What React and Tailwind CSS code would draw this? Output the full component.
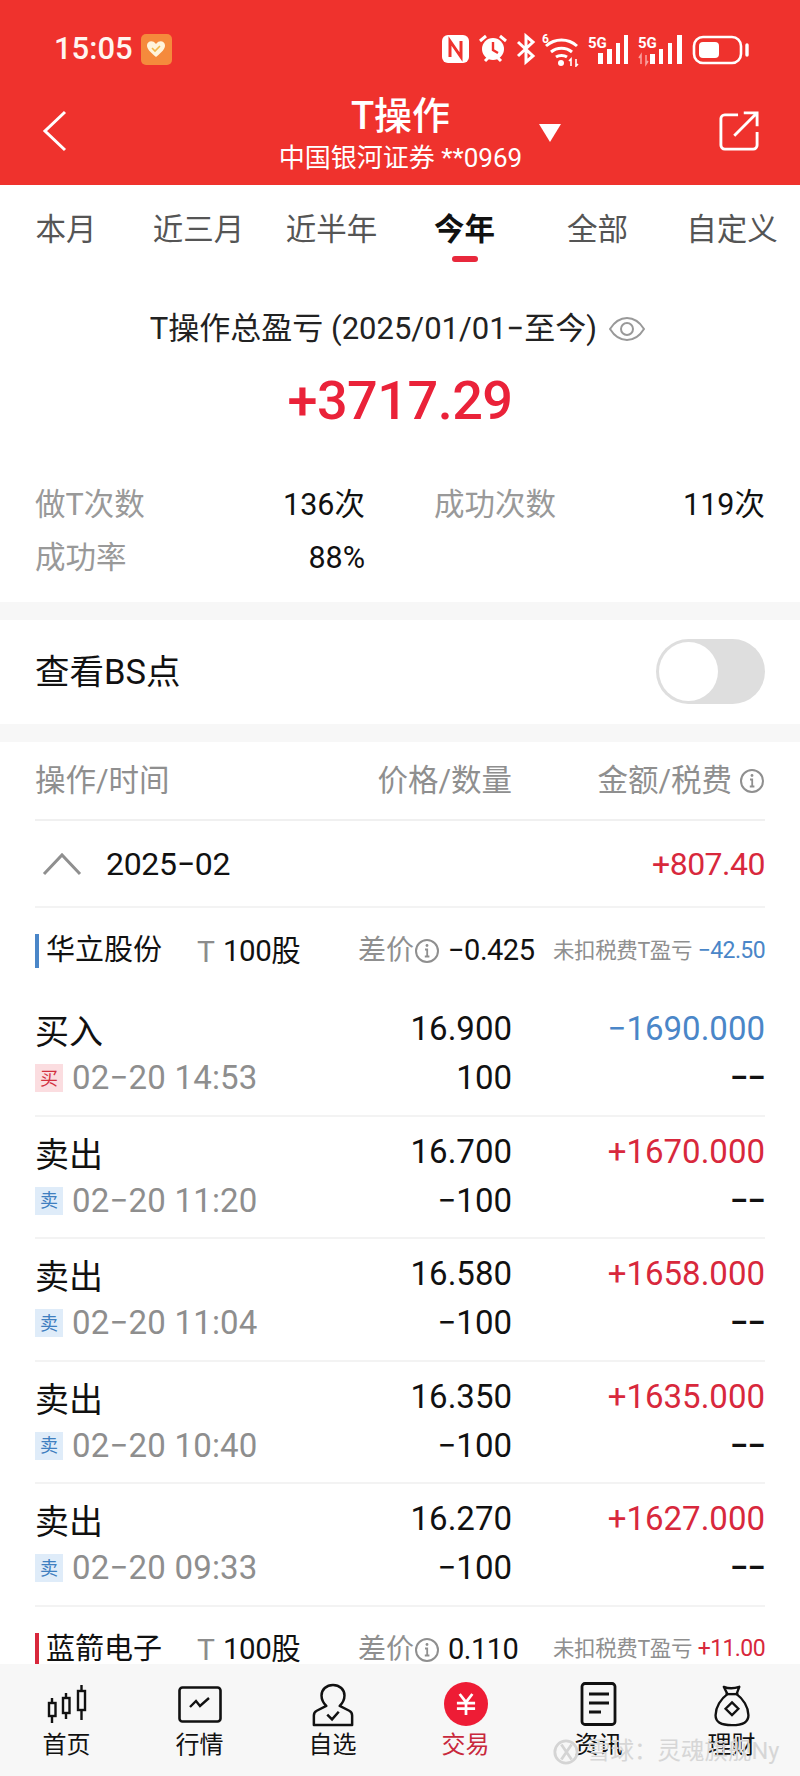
// App.jsx
import React from 'react';

const rows = [
  { side: '买入', time: '02−20 14:53', price: '16.900', qty: '100', amount: '−1690.000' },
  { side: '卖出', time: '02−20 11:20', price: '16.700', qty: '−100', amount: '+1670.000' },
  { side: '卖出', time: '02−20 11:04', price: '16.580', qty: '−100', amount: '+1658.000' },
  { side: '卖出', time: '02−20 10:40', price: '16.350', qty: '−100', amount: '+1635.000' },
  { side: '卖出', time: '02−20 09:33', price: '16.270', qty: '−100', amount: '+1627.000' },
];

const tabs = [
  { label: '本月', w: 'w-[132px]' },
  { label: '近三月', w: 'w-[133px]' },
  { label: '近半年', w: 'w-[133px]' },
  { label: '今年', w: 'w-[133px]', active: true },
  { label: '全部', w: 'w-[133px]' },
  { label: '自定义', w: 'w-[136px]' },
];

const InfoIcon = ({ size = 26, color = '#8f8f8f' }) => (
  <svg width={size} height={size} viewBox="0 0 26 26" fill="none" stroke={color} strokeWidth="2">
    <circle cx="13" cy="13" r="11" />
    <circle cx="13" cy="7.5" r="1.4" fill={color} stroke="none" />
    <path d="M11 11.5h2.2v7M10.8 18.5h4.6" strokeWidth="1.8" />
  </svg>
);

const StatusIcons = () => (
  <svg width="312" height="36" viewBox="0 0 312 36" fill="none">
    {/* nfc */}
    <rect x="0" y="4" width="27" height="28" rx="6" fill="#fff" />
    <path d="M8 26V10l11 16V10" stroke="#ef322d" strokeWidth="3" />
    {/* alarm */}
    <circle cx="51" cy="18" r="11" fill="#fff" />
    <path d="M51 11v8l5 3" stroke="#ef322d" strokeWidth="2.4" />
    <path d="M38 10l6-5M64 10l-6-5M43 30l3-3M59 30l-3-3" stroke="#fff" strokeWidth="3" />
    {/* bluetooth */}
    <path d="M76 11l15 14-7 6V5l7 6-15 14" stroke="#fff" strokeWidth="3" />
    {/* wifi */}
    <text x="100" y="12" fill="#fff" fontSize="12" fontWeight="700" fontFamily="Roboto">6</text>
    <path d="M104 15c9-8 22-8 31 0M109 21c6-5 15-5 21 0M114 26c3-2 8-2 11 0" stroke="#fff" strokeWidth="3" />
    <circle cx="119" cy="32" r="3" fill="#fff" />
    <path d="M129 35v-7l-2 2M134 28v7l2-2" stroke="#fff" strokeWidth="1.6" />
    {/* sim 1 */}
    <text x="146" y="17" fill="#fff" fontSize="15" fontWeight="700" fontFamily="Roboto">5G</text>
    <path d="M156 22h5v11h-5zM165 18h5v15h-5zM174 12h4v21h-4zM182 4h4v29h-4z" fill="#fff" />
    {/* sim 2 */}
    <text x="196" y="17" fill="#fff" fontSize="15" fontWeight="700" fontFamily="Roboto">5G</text>
    <path d="M199 33v-9l-2 3M204 24v9l2-3" stroke="#ffffff88" strokeWidth="1.6" />
    <path d="M208 23h5v10h-5zM217 18h4v15h-4zM226 12h4v21h-4zM235 4h5v29h-5z" fill="#fff" />
    {/* battery */}
    <rect x="252" y="6" width="47" height="26" rx="9" stroke="#fff" strokeWidth="2.6" />
    <rect x="257" y="11" width="20" height="16" rx="4" fill="#fff" />
    <path d="M305 14v10" stroke="#fff" strokeWidth="3.4" strokeLinecap="round" />
  </svg>
);

const NavIcon = ({ name }) => {
  if (name === 'home') {
    return (
      <svg width="40" height="38" viewBox="0 0 40 38" fill="none" stroke="#111" strokeWidth="2.4" className="mt-[3px]">
        <rect x="2" y="18" width="6.500" height="13" /><path d="M5 13v5M5 31v7" />
        <rect x="16" y="13" width="6.500" height="15" /><path d="M19 8v5M19 28v6" />
        <rect x="31" y="6" width="7" height="19" /><path d="M34.500 0v6M34.500 25v10" />
      </svg>
    );
  }
  if (name === 'market') {
    return (
      <svg width="44" height="37" viewBox="0 0 44 37" fill="none" stroke="#111" strokeWidth="2.6" className="mt-[4px]">
        <rect x="1.500" y="1.500" width="41" height="34" rx="3" />
        <path d="M12 21l6-6 4 5 9-8" strokeWidth="2.4" />
      </svg>
    );
  }
  if (name === 'watch') {
    return (
      <svg width="44" height="44" viewBox="0 0 46 46" fill="none" stroke="#111" strokeWidth="2.6" className="mt-[1px]">
        <path d="M3 44h40v-10c0-3-1-4-3-5l-10-5c3-3 5-7 5-11 0-6-5-11-12-11S11 7 11 13c0 4 2 8 5 11L6 29c-2 1-3 2-3 5z" strokeLinejoin="round" />
        <path d="M17 33l5 5 7-8" />
      </svg>
    );
  }
  if (name === 'trade') {
    return (
      <div className="flex h-[44px] w-[44px] items-center justify-center rounded-full bg-[#ee1c35]">
        <svg width="20" height="22" viewBox="0 0 22 24" fill="none" stroke="#fff" strokeWidth="3">
          <path d="M4 1l7 9 7-9M1 11h20M1 17h20M11 10v14" />
        </svg>
      </div>
    );
  }
  if (name === 'news') {
    return (
      <svg width="37" height="44" viewBox="0 0 37 44" fill="none" stroke="#111" strokeWidth="2.8">
        <rect x="2" y="1.500" width="33" height="41" rx="3" />
        <path d="M9 12h20M9 21h20M9 30h12" />
      </svg>
    );
  }
  return (
    <svg width="40" height="42" viewBox="0 0 42 46" fill="none" stroke="#111" strokeWidth="2.6" className="mt-[3px]">
      <path d="M12 2c5 2 11 2 17 0l-3 8c7 5 13 14 13 23 0 8-6 11-18 11S3 41 3 33c0-9 6-18 13-23z" strokeLinejoin="round" />
      <path d="M14 10h14" />
      <path d="M21 19l7 7-7 7-7-7z" />
    </svg>
  );
};

const NavItem = ({ icon, label, active }) => (
  <div className="flex w-[133px] flex-col items-center">
    <div className="flex h-[46px] items-start justify-center">
      <NavIcon name={icon} />
    </div>
    <span className={`mt-[1px] text-[24px] leading-[32px] ${active ? 'text-[#c8283c]' : 'text-[#111]'}`}>{label}</span>
  </div>
);

const StockHeader = ({ name, barColor, diff, profit, profitColor }) => (
  <div className="flex h-[86px] items-center">
    <div className="flex w-[323px] items-center">
      <div className={`mr-[7px] h-[34px] w-[4px] ${barColor}`}></div>
      <span className="w-[151px] text-[29px] text-[#111]">{name}</span>
      <span className="w-[26px] text-[30px] text-[#8c8c8c]">T</span>
      <span className="text-[29.500px] tracking-[-0.5px] text-[#111]">100股</span>
    </div>
    <div className="flex w-[195px] items-center">
      <span className="text-[28px] text-[#8f8f8f]">差价</span>
      <InfoIcon />
      <span className="ml-[8px] text-[29px] tracking-[-0.5px] text-[#111]">{diff}</span>
    </div>
    <div className="flex flex-1 items-center justify-between">
      <span className="text-[21.500px] tracking-[-0.4px] text-[#8f8f8f]">未扣税费T盈亏</span>
      <span className={`text-[23px] tracking-[-0.6px] ${profitColor}`}>{profit}</span>
    </div>
  </div>
);

const TradeRow = ({ row }) => {
  const buy = row.side === '买入';
  return (
    <div className="flex h-[122.500px] border-b-2 border-[#f3f3f3] pt-[10px]">
      <div className="w-[277px]">
        <div className="text-[34px] leading-[56px] text-[#111]">{row.side}</div>
        <div className="flex h-[36px] items-center">
          <span className={`mr-[9px] flex h-[28px] w-[28px] items-center justify-center text-[18px] ${buy ? 'bg-[#fbdde0] text-[#d2303f]' : 'bg-[#dfecf9] text-[#3f7fc0]'}`}>
            {buy ? '买' : '卖'}
          </span>
          <span className="text-[33px] tracking-[0.2px] text-[#8e8e8e]">{row.time}</span>
        </div>
      </div>
      <div className="w-[200px] text-right text-[33px] text-[#111]">
        <div className="leading-[50px]">{row.price}</div>
        <div className="leading-[48px]">{row.qty}</div>
      </div>
      <div className="flex-1 text-right text-[33px]">
        <div className={`leading-[50px] ${buy ? 'text-[#4a86c8]' : 'text-[#d8283c]'}`}>{row.amount}</div>
        <div className="font-medium leading-[48px] tracking-[-1px] text-[#111]">−−</div>
      </div>
    </div>
  );
};

export default function App() {
  return (
    <div className="relative flex h-[1776px] w-[800px] flex-col overflow-hidden bg-white [font-family:Roboto,'Noto_Sans_CJK_SC',sans-serif]">
      {/* red top bar */}
      <header className="h-[185px] shrink-0 bg-[#ef322d] text-white">
        <div className="flex h-[90px] items-center justify-between pl-[54px] pr-[46px] pt-[8px]">
          <div className="flex items-center">
            <span className="text-[31px] font-medium text-[#fff5f0]">15:05</span>
            <div className="ml-[8px] flex h-[31px] w-[31px] items-center justify-center rounded-[5px] bg-[#f58a3c]">
              <svg width="20" height="20" viewBox="0 0 20 20">
                <path d="M10 18C4 13 1 10 1 6.500 1 3 6 0 10 5c4-5 9-2 9 1.500 0 3.500-3 6.500-9 11.500z" fill="#fff4dc" />
                <path d="M6 9l3 3 5-5" stroke="#f2b74a" strokeWidth="1.600" fill="none" />
              </svg>
            </div>
          </div>
          <StatusIcons />
        </div>
        <div className="grid h-[95px] grid-cols-[1fr_auto_1fr] items-start pl-[42px] pr-[41px]">
          <svg width="26" height="42" viewBox="0 0 26 42" fill="none" stroke="#fff" strokeWidth="3" className="mt-[20px]">
            <path d="M23 2L3 21l20 19" />
          </svg>
          <div className="flex flex-col items-center pt-[2px]">
            <span className="text-[38px] font-medium leading-[48px]">T操作</span>
            <span className="text-[26px] leading-[36px]">中国银河证券 **0969</span>
          </div>
          <div className="flex items-start justify-between">
            <svg width="24" height="20" viewBox="0 0 24 20" fill="#fff" className="ml-[16px] mt-[33px]">
              <path d="M1 1h22L12 19z" />
            </svg>
            <svg width="40" height="42" viewBox="0 0 42 42" fill="none" stroke="#fff" strokeWidth="3" className="mt-[20px]">
              <path d="M20 4H6a4 4 0 0 0-4 4v28a4 4 0 0 0 4 4h30a4 4 0 0 0 4-4V22M16 26L39 3M26 2h14v14" />
            </svg>
          </div>
        </div>
      </header>

      {/* scrolling content, clipped by the bottom nav */}
      <main className="min-h-0 flex-1 overflow-hidden">
        <div className="flex h-[73px] items-start pt-[23px]">
          {tabs.map((t) => (
            <div key={t.label} className={`relative text-center text-[30.500px] leading-[44px] ${t.w} ${t.active ? 'font-bold text-[#111]' : 'text-[#555]'}`}>
              {t.label}
              {t.active && (
                <div className="absolute left-1/2 top-[48px] h-[6px] w-[26px] -translate-x-1/2 rounded-full bg-[#e8283c]"></div>
              )}
            </div>
          ))}
        </div>

        <div className="flex h-[344px] flex-col px-[35px]">
          <div className="mt-[49px] flex h-[44px] items-center justify-center pr-[5px] text-[31px] text-[#222]">
            <span>T操作总盈亏 (2025/01/01−至今)</span>
            <svg width="36" height="28" viewBox="0 0 36 28" fill="none" stroke="#999" strokeWidth="2" className="ml-[12px]">
              <path d="M1 14C6 6 11 3 18 3s12 3 17 11c-5 8-10 11-17 11S6 22 1 14z" />
              <circle cx="18" cy="14" r="6" />
            </svg>
          </div>
          <div className="mt-[18px] h-[64px] text-center text-[54px] font-medium leading-[64px] tracking-[-0.5px] text-[#ea2239]">+3717.29</div>
          <div className="mt-[45px] grid grid-cols-[330px_331px] gap-x-[69px] text-[30.500px]">
            <div className="flex h-[53px] items-center justify-between">
              <span className="text-[#999]">做T次数</span>
              <span className="text-[#111]">136次</span>
            </div>
            <div className="flex h-[53px] items-center justify-between">
              <span className="text-[#999]">成功次数</span>
              <span className="text-[#111]">119次</span>
            </div>
            <div className="flex h-[53px] items-center justify-between">
              <span className="text-[#999]">成功率</span>
              <span className="text-[#111]">88%</span>
            </div>
          </div>
        </div>

        <div className="h-[18px] bg-[#f7f7f7]"></div>

        <div className="flex h-[104px] items-center justify-between px-[35px]">
          <span className="pt-[2px] text-[34.500px] text-[#111]">查看BS点</span>
          <div className="-mt-[1px] flex h-[65px] w-[109px] items-center rounded-full bg-[#dedede] px-[3px]">
            <div className="h-[59px] w-[59px] rounded-full bg-white"></div>
          </div>
        </div>

        <div className="h-[18px] bg-[#f7f7f7]"></div>

        <div className="px-[35px]">
          <div className="flex h-[79px] items-center border-b-2 border-[#f0f0f0] text-[30.500px] text-[#8f8f8f]">
            <span className="w-[277px]">操作/时间</span>
            <span className="w-[200px] text-right">价格/数量</span>
            <div className="flex flex-1 items-center justify-end">
              <span>金额/税费</span>
              <span className="ml-[7px]"><InfoIcon size={26} /></span>
            </div>
          </div>
          <div className="flex h-[87px] items-center border-b-2 border-[#f3f3f3]">
            <svg width="40" height="24" viewBox="0 0 40 24" fill="none" stroke="#8f8f8f" strokeWidth="3" className="ml-[7px]">
              <path d="M2 22L20 3l18 19" />
            </svg>
            <span className="ml-[24px] text-[32px] tracking-[-0.3px] text-[#111]">2025−02</span>
            <span className="ml-auto text-[32px] tracking-[-0.5px] text-[#d8283c]">+807.40</span>
          </div>
          <StockHeader name="华立股份" barColor="bg-[#4a86c8]" diff="−0.425" profit="−42.50" profitColor="text-[#4a86c8]" />
          {rows.map((r) => (
            <TradeRow key={r.time} row={r} />
          ))}
          <StockHeader name="蓝箭电子" barColor="bg-[#d8283c]" diff="0.110" profit="+11.00" profitColor="text-[#d8283c]" />
        </div>
      </main>

      {/* bottom nav */}
      <nav className="flex h-[112px] shrink-0 bg-[#f7f7f7] pt-[18px]">
        <NavItem icon="home" label="首页" />
        <NavItem icon="market" label="行情" />
        <NavItem icon="watch" label="自选" />
        <NavItem icon="trade" label="交易" active />
        <NavItem icon="news" label="资讯" />
        <NavItem icon="wealth" label="理财" />
      </nav>

      {/* snowball watermark over the nav */}
      <div className="absolute bottom-[8px] left-[553px] flex h-[32px] items-center text-[23.500px] text-[#d6d6d6]">
        <svg width="26" height="28" viewBox="0 0 28 30" fill="none" stroke="#d4d4d4" strokeWidth="3">
          <circle cx="14" cy="15" r="12" />
          <path d="M9 7l11 16M20 7L9 23" />
        </svg>
        <span className="ml-[8px]">雪球：灵魂旗舰Ny</span>
      </div>
    </div>
  );
}
